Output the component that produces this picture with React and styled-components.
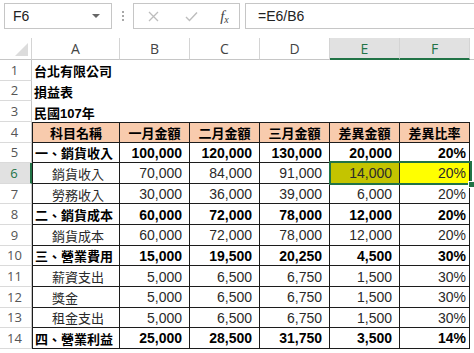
import styled, { createGlobalStyle } from "styled-components";

const GlobalStyle = createGlobalStyle`
  html, body { margin: 0; padding: 0; background: #fff; }
  body {
    font-family: "Liberation Sans", "Noto Sans CJK TC", sans-serif;
    overflow: hidden;
  }
`;

const Window = styled.div`
  width: 474px;
  height: 353px;
  overflow: hidden;
  background: #fff;
`;

const FormulaBar = styled.div`
  display: flex;
  align-items: center;
  height: 26px;
  padding: 3px 0 9px 4px;
`;

const NameBox = styled.div`
  box-sizing: border-box;
  width: 108px;
  height: 26px;
  border: 1px solid #c6c6c6;
  display: flex;
  align-items: center;
  justify-content: space-between;
  padding: 0 11px 0 8px;
  font-size: 14px;
  color: #222;
`;

const DropArrow = styled.span`
  width: 0;
  height: 0;
  border-left: 4px solid transparent;
  border-right: 4px solid transparent;
  border-top: 4px solid #666;
`;

const Grip = styled.div`
  width: 21px;
  display: flex;
  flex-direction: column;
  align-items: center;
  gap: 2px;

  span {
    width: 2px;
    height: 2px;
    background: #a8a8a8;
  }
`;

const ActionBox = styled.div`
  box-sizing: border-box;
  height: 26px;
  border: 1px solid #c6c6c6;
  display: flex;
  align-items: center;
`;

const Action = styled.div`
  width: ${(p) => p.$w}px;
  display: flex;
  justify-content: center;
  align-items: center;
`;

const Fx = styled.span`
  font-family: "Liberation Serif", serif;
  font-style: italic;
  font-size: 15px;
  color: #444;

  small {
    font-size: 10px;
    position: relative;
    top: 2px;
  }
`;

const FormulaInput = styled.div`
  box-sizing: border-box;
  flex: 1;
  height: 26px;
  margin-left: 5px;
  border: 1px solid #c6c6c6;
  border-right: none;
  display: flex;
  align-items: center;
  padding-left: 12px;
  font-size: 14px;
  color: #222;
`;

const Sheet = styled.div`
  display: grid;
  grid-template-columns: 32px 88px repeat(5, 70px) 1fr;
  grid-template-rows: 22px repeat(14, 20.64px) 1fr;
  height: 315px;
`;

const Corner = styled.div`
  grid-area: 1 / 1;
  box-sizing: border-box;
  border-right: 1px solid #d4d4d4;
  border-bottom: 1px solid #c6c6c6;
  display: flex;
  align-items: flex-end;
  justify-content: flex-end;
  padding: 0 3px 3px 0;
`;

const CornerMark = styled.span`
  width: 0;
  height: 0;
  border-left: 13px solid transparent;
  border-bottom: 13px solid #dcdcdc;
`;

const ColHead = styled.div`
  grid-area: 1 / ${(p) => p.$c};
  box-sizing: border-box;
  display: flex;
  align-items: center;
  justify-content: center;
  font-family: "Open Sans", sans-serif;
  font-size: 14px;
  color: ${(p) => (p.$active ? "#217346" : "#444")};
  background: ${(p) => (p.$active ? "#e1e1e1" : "#fff")};
  border-right: ${(p) => (p.$filler ? "none" : "1px solid #d4d4d4")};
  border-bottom: ${(p) => (p.$active ? "2px solid #217346" : "1px solid #c6c6c6")};
`;

const RowHead = styled.div`
  grid-area: ${(p) => p.$r} / 1;
  box-sizing: border-box;
  display: flex;
  align-items: center;
  justify-content: center;
  padding-right: 2px;
  font-family: "Open Sans", sans-serif;
  font-size: 13px;
  color: ${(p) => (p.$active ? "#217346" : "#555")};
  background: ${(p) => (p.$active ? "#e1e1e1" : "#fff")};
  border-right: ${(p) => (p.$active ? "2px solid #217346" : "1px solid #c6c6c6")};
  border-bottom: 1px solid #dadada;
`;

const line = "1px solid #1c1c1c";

const Cell = styled.div`
  grid-area: ${(p) => p.$r} / ${(p) => p.$c};
  box-sizing: border-box;
  display: flex;
  align-items: center;
  justify-content: ${(p) =>
    p.$align === "right" ? "flex-end" : p.$align === "center" ? "center" : "flex-start"};
  padding: 1px ${(p) => p.$pr ?? 2}px 0 ${(p) => p.$pl ?? 2}px;
  white-space: nowrap;
  font-size: ${(p) => (p.$label ? 13 : 14)}px;
  font-weight: ${(p) => (p.$bold ? 700 : 400)};
  color: ${(p) => (p.$bold ? "#000" : "#2a2a2a")};
  background: ${(p) => p.$fill || "transparent"};
  border-right: ${(p) => (p.$boxed ? line : "none")};
  border-bottom: ${(p) => (p.$boxed ? line : "none")};
  border-left: ${(p) => (p.$boxed && p.$first ? line : "none")};
  border-top: ${(p) => (p.$boxed && p.$top ? line : "none")};
`;

const Selection = styled.div`
  grid-area: 7 / 6 / 8 / 8;
  margin: -2px -2px -1px -1px;
  border: 2px solid #217346;
  position: relative;
  pointer-events: none;
`;

const FillHandle = styled.span`
  position: absolute;
  right: -5px;
  bottom: -5px;
  width: 5px;
  height: 5px;
  background: #217346;
  border: 1px solid #fff;
`;

const titles = ["台北有限公司", "損益表", "民國107年"];

const header = ["科目名稱", "一月金額", "二月金額", "三月金額", "差異金額", "差異比率"];

const data = [
  { label: "一、銷貨收入", values: ["100,000", "120,000", "130,000", "20,000", "20%"], bold: true },
  { label: "銷貨收入", values: ["70,000", "84,000", "91,000", "14,000", "20%"], sub: true },
  { label: "勞務收入", values: ["30,000", "36,000", "39,000", "6,000", "20%"], sub: true },
  { label: "二、銷貨成本", values: ["60,000", "72,000", "78,000", "12,000", "20%"], bold: true },
  { label: "銷貨成本", values: ["60,000", "72,000", "78,000", "12,000", "20%"], sub: true },
  { label: "三、營業費用", values: ["15,000", "19,500", "20,250", "4,500", "30%"], bold: true },
  { label: "薪資支出", values: ["5,000", "6,500", "6,750", "1,500", "30%"], sub: true },
  { label: "獎金", values: ["5,000", "6,500", "6,750", "1,500", "30%"], sub: true },
  { label: "租金支出", values: ["5,000", "6,500", "6,750", "1,500", "30%"], sub: true },
  { label: "四、營業利益", values: ["25,000", "28,500", "31,750", "3,500", "14%"], bold: true },
];

const cols = ["A", "B", "C", "D", "E", "F"];

// selected range E6:F6, active cell F6
const fillFor = (rowNo, col) => {
  if (rowNo !== 6) return null;
  if (col === 5) return "#c4c400";
  if (col === 6) return "#ffff00";
  return null;
};

export default function App() {
  return (
    <>
      <GlobalStyle />
      <Window>
        <FormulaBar>
          <NameBox>
            F6
            <DropArrow />
          </NameBox>
          <Grip>
            <span />
            <span />
            <span />
          </Grip>
          <ActionBox>
            <Action $w={38}>
              <svg width="11" height="11" viewBox="0 0 11 11">
                <path d="M1 1L10 10M10 1L1 10" stroke="#bdbdbd" strokeWidth="1.3" />
              </svg>
            </Action>
            <Action $w={38}>
              <svg width="13" height="11" viewBox="0 0 13 11">
                <path d="M1 6L4.5 9.5L12 1.5" stroke="#bdbdbd" strokeWidth="1.4" fill="none" />
              </svg>
            </Action>
            <Action $w={29}>
              <Fx>
                f<small>x</small>
              </Fx>
            </Action>
          </ActionBox>
          <FormulaInput>=E6/B6</FormulaInput>
        </FormulaBar>

        <Sheet>
          <Corner>
            <CornerMark />
          </Corner>
          {cols.map((c, i) => (
            <ColHead key={c} $c={i + 2} $active={c === "E" || c === "F"}>
              {c}
            </ColHead>
          ))}
          <ColHead $c={8} $filler />

          {Array.from({ length: 14 }, (_, i) => (
            <RowHead key={i} $r={i + 2} $active={i + 1 === 6}>
              {i + 1}
            </RowHead>
          ))}

          {titles.map((t, i) => (
            <Cell key={t} $r={i + 2} $c={2} $label $bold>
              {t}
            </Cell>
          ))}

          {header.map((h, i) => (
            <Cell
              key={h}
              $r={5}
              $c={i + 2}
              $label
              $bold
              $boxed
              $top
              $first={i === 0}
              $align="center"
              $fill="#f8cbad"
            >
              {h}
            </Cell>
          ))}

          {data.map((row, ri) => {
            const rowNo = ri + 5;
            const r = rowNo + 1;
            return [
              <Cell
                key={`l${ri}`}
                $r={r}
                $c={2}
                $label
                $boxed
                $first
                $bold={row.bold}
                $pl={row.sub ? 19 : 2}
              >
                {row.label}
              </Cell>,
              ...row.values.map((v, vi) => (
                <Cell
                  key={`v${ri}-${vi}`}
                  $r={r}
                  $c={vi + 3}
                  $boxed
                  $bold={row.bold}
                  $align="right"
                  $pr={vi === 4 ? 3 : 7}
                  $fill={fillFor(rowNo, vi + 2)}
                >
                  {v}
                </Cell>
              )),
            ];
          })}

          <Selection>
            <FillHandle />
          </Selection>
        </Sheet>
      </Window>
    </>
  );
}
